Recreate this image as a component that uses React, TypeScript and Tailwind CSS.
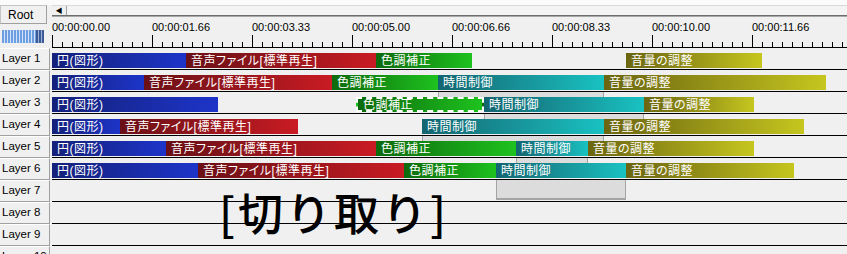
import React from "react";

type Kind = "blue" | "red" | "green" | "teal" | "olive";

type Bar = {
    kind: Kind;
    from: number;
    to: number;
    selected?: boolean;
};

type Row = {
    name: string;
    shade?: [number, number];
    bars: Bar[];
};

// timeline starts at x=52 on the page
const ORIGIN = 52;

const labels: Record<Kind, string> = {
    blue: "円(図形)",
    red: "音声ファイル[標準再生]",
    green: "色調補正",
    teal: "時間制御",
    olive: "音量の調整",
};

const colors: Record<Kind, string> = {
    blue: "bg-gradient-to-r from-[#14217a] to-[#1d34c9]",
    red: "bg-gradient-to-r from-[#6a1016] to-[#c91b23]",
    green: "bg-gradient-to-r from-[#0d6a0d] to-[#1ec21e]",
    teal: "bg-gradient-to-r from-[#136570] to-[#19c2c2]",
    olive: "bg-gradient-to-r from-[#6b6510] to-[#c6c61f]",
};

const rows: Row[] = [
    {
        name: "Layer 1",
        bars: [
            { kind: "blue", from: 52, to: 186 },
            { kind: "red", from: 186, to: 376 },
            { kind: "green", from: 376, to: 472 },
            { kind: "olive", from: 626, to: 762 },
        ],
    },
    {
        name: "Layer 2",
        bars: [
            { kind: "blue", from: 52, to: 144 },
            { kind: "red", from: 144, to: 332 },
            { kind: "green", from: 332, to: 438 },
            { kind: "teal", from: 438, to: 604 },
            { kind: "olive", from: 604, to: 826 },
        ],
    },
    {
        name: "Layer 3",
        shade: [438, 604],
        bars: [
            { kind: "blue", from: 52, to: 218 },
            { kind: "green", from: 356, to: 484, selected: true },
            { kind: "teal", from: 484, to: 644 },
            { kind: "olive", from: 644, to: 754 },
        ],
    },
    {
        name: "Layer 4",
        shade: [484, 644],
        bars: [
            { kind: "blue", from: 52, to: 120 },
            { kind: "red", from: 120, to: 298 },
            { kind: "teal", from: 422, to: 604 },
            { kind: "olive", from: 604, to: 804 },
        ],
    },
    {
        name: "Layer 5",
        shade: [422, 604],
        bars: [
            { kind: "blue", from: 52, to: 166 },
            { kind: "red", from: 166, to: 376 },
            { kind: "green", from: 376, to: 516 },
            { kind: "teal", from: 516, to: 588 },
            { kind: "olive", from: 588, to: 754 },
        ],
    },
    {
        name: "Layer 6",
        shade: [516, 588],
        bars: [
            { kind: "blue", from: 52, to: 198 },
            { kind: "red", from: 198, to: 404 },
            { kind: "green", from: 404, to: 496 },
            { kind: "teal", from: 496, to: 626 },
            { kind: "olive", from: 626, to: 794 },
        ],
    },
    { name: "Layer 7", shade: [496, 626], bars: [] },
    { name: "Layer 8", bars: [] },
    { name: "Layer 9", bars: [] },
    { name: "Layer 10", bars: [] },
];

const marks = [
    "00:00:00.00",
    "00:00:01.66",
    "00:00:03.33",
    "00:00:05.00",
    "00:00:06.66",
    "00:00:08.33",
    "00:00:10.00",
    "00:00:11.66",
];

function Ruler() {
    return (
        <div className="flex">
            {marks.map((m) => (
                <div key={m} className="w-[100px] shrink-0">
                    <div className="h-[18px] pt-[4px] text-[11px] leading-[13px] text-black">{m}</div>
                    <div className="flex h-[12px] items-end">
                        {Array.from({ length: 10 }).map((_, i) => (
                            <div key={i} className="w-[10px] shrink-0">
                                <div className={i === 0 ? "h-[12px] w-px bg-black" : "h-[5px] w-px bg-black"} />
                            </div>
                        ))}
                    </div>
                </div>
            ))}
        </div>
    );
}

function Clip({ bar }: { bar: Bar }) {
    return (
        <div
            className={`absolute top-[5px] flex h-[15px] items-center overflow-hidden whitespace-nowrap text-[12px] leading-none tracking-[0.5px] text-white [font-feature-settings:'palt'] ${colors[bar.kind]} ${
                bar.selected ? "border-2 border-dashed border-white pl-[5px]" : "pl-[5px]"
            }`}
            style={{ left: bar.from - ORIGIN, width: bar.to - bar.from }}
        >
            {labels[bar.kind]}
        </div>
    );
}

export default function App() {
    return (
        <div
            className="relative h-[254px] w-[847px] overflow-hidden bg-[#f0f0f0] text-black"
            style={{ fontFamily: '"Liberation Sans", "Noto Sans CJK JP", sans-serif' }}
        >
            <div className="h-[5px] bg-[#fbfbfb]" />

            {/* header */}
            <div className="flex h-[43px]">
                <div className="w-[52px] shrink-0">
                    <div className="flex h-[19px] w-[47px] items-center border border-[#c4c4c4] border-r-[#a0a0a0] border-b-[#a0a0a0] pl-[7px] text-[12px]">
                        Root
                    </div>
                    <div className="ml-[2px] mt-[6px] flex h-[13px] w-[42px]">
                        <div className="h-full w-[34px] bg-[repeating-linear-gradient(90deg,#6c9fe2_0_2px,#d3e2f6_2px_3px)]" />
                        <div className="h-full w-[8px] bg-[repeating-linear-gradient(90deg,#3b5b98_0_2px,#9fb2d4_2px_3px)]" />
                    </div>
                </div>
                <div className="flex-1">
                    <div className="flex h-[10px] border-t border-[#dadada]">
                        <div className="flex w-[15px] items-center justify-center border-r border-[#a0a0a0] bg-[#f0f0f0] text-[7px] leading-none">
                            ◀
                        </div>
                        <div className="flex-1 bg-[#f4f4f4]" />
                    </div>
                    <div className="h-[2px] border-t border-[#6e6e6e] bg-[#a8a8a8]" />
                    <Ruler />
                    <div className="h-px bg-black" />
                </div>
            </div>

            {/* layers */}
            {rows.map((row) => (
                <div key={row.name} className="flex h-[22px]">
                    <div className="w-[52px] shrink-0">
                        <div className="flex h-full w-[50px] items-center border-t border-r border-b border-t-white border-r-[#a0a0a0] border-b-[#a0a0a0] pl-[2px] text-[11.5px] whitespace-pre">
                            {row.name}
                        </div>
                    </div>
                    <div className="relative flex-1 border-b border-black">
                        {row.shade && (
                            <div
                                className="absolute top-0 h-[20px] border-x border-b-2 border-[#a4a4a4] bg-[#dcdcdc]"
                                style={{ left: row.shade[0] - ORIGIN, width: row.shade[1] - row.shade[0] }}
                            />
                        )}
                        {row.bars.map((bar) => (
                            <Clip key={bar.from + bar.kind} bar={bar} />
                        ))}
                    </div>
                </div>
            ))}

            {/* overlay caption */}
            <div
                className="absolute left-[219px] top-[189px] text-[45px] font-medium leading-none tracking-[3px] text-black"
                style={{ fontFamily: '"Noto Sans CJK JP", sans-serif' }}
            >
                [切り取り]
            </div>
        </div>
    );
}
